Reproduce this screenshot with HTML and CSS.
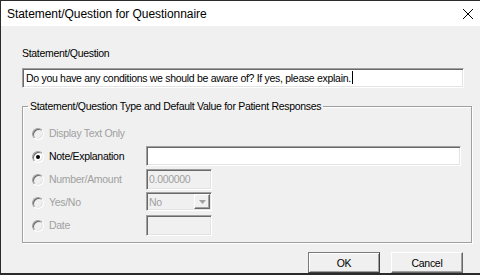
FILE: index.html
```
<!DOCTYPE html>
<html lang="en">
<head>
  <meta charset="UTF-8">
  <title>Statement/Question for Questionnaire</title>
  <link rel="stylesheet" href="styles.css">
</head>
<body>
  <div class="window">
    <div class="titlebar">
      <span class="title">Statement/Question for Questionnaire</span>
      <svg class="close" width="12" height="12" viewBox="0 0 12 12">
        <path d="M1 1 L11 11 M11 1 L1 11" stroke="#000" stroke-width="1" fill="none"/>
      </svg>
    </div>

    <div class="content">
      <div class="field-label">Statement/Question</div>
      <div class="textbox">Do you have any conditions we should be aware of? If yes, please explain.<span class="caret"></span></div>

      <fieldset class="group">
        <legend>Statement/Question Type and Default Value for Patient Responses</legend>

        <div class="option disabled">
          <span class="radio"></span>
          <span class="option-label">Display Text Only</span>
        </div>
        <div class="option">
          <span class="radio checked"></span>
          <span class="option-label">Note/Explanation</span>
          <div class="input wide"></div>
        </div>
        <div class="option disabled">
          <span class="radio"></span>
          <span class="option-label">Number/Amount</span>
          <div class="input short readonly">0.000000</div>
        </div>
        <div class="option disabled">
          <span class="radio"></span>
          <span class="option-label">Yes/No</span>
          <div class="select short">
            <span class="select-value">No</span>
            <span class="select-arrow">
              <svg width="7" height="4" viewBox="0 0 7 4"><path d="M0 0 H7 L3.5 4 Z" fill="#a0a0a0"/></svg>
            </span>
          </div>
        </div>
        <div class="option disabled">
          <span class="radio"></span>
          <span class="option-label">Date</span>
          <div class="input short readonly"></div>
        </div>
      </fieldset>

      <div class="buttons">
        <button class="btn default">OK</button>
        <button class="btn">Cancel</button>
      </div>
    </div>
  </div>
</body>
</html>
```

FILE: styles.css
```
html, body {
  margin: 0;
  padding: 0;
}

body {
  font-family: "Liberation Sans", Arial, sans-serif;
  font-size: 10.5px;
  letter-spacing: -0.3px;
  color: #000;
  background-color: #f0f0f0;
}

.window {
  width: 480px;
  height: 275px;
  box-sizing: border-box;
  border-top: 1px solid #2b2b2b;
  border-left: 1px solid #2b2b2b;
  border-bottom: 2px solid #2b2b2b;
  background-color: #f0f0f0;
  display: flex;
  flex-direction: column;
}

/* title bar */
.titlebar {
  height: 25px;
  flex: none;
  background-color: #ffffff;
  display: flex;
  align-items: center;
  justify-content: space-between;
  padding: 0 6px 0 6px;
}

.title {
  font-size: 12px;
  letter-spacing: -0.05px;
}

/* dialog content */
.content {
  flex: 1;
  padding: 21px 0 0 21px;
  display: flex;
  flex-direction: column;
  align-items: flex-start;
}

.field-label {
  line-height: 13px;
  height: 13px;
}

.textbox {
  margin-top: 8px;
  width: 442px;
  height: 20px;
  box-sizing: border-box;
  background: #ffffff;
  border-style: solid;
  border-width: 1px;
  border-color: #a0a0a0 #ffffff #ffffff #a0a0a0;
  box-shadow: inset 1px 1px 0 #696969, inset -1px -1px 0 #e3e3e3;
  padding: 2px 0 0 3px;
  line-height: 14px;
  white-space: nowrap;
}

.caret {
  display: inline-block;
  width: 1px;
  height: 13px;
  background: #000;
  vertical-align: -2px;
  margin-left: 1px;
}

/* group box */
.group {
  margin: 12px 0 0 0;
  width: 450px;
  box-sizing: border-box;
  border: 1px solid #a0a0a0;
  box-shadow: inset 1px 1px 0 #ffffff, 1px 1px 0 #ffffff;
  padding: 10px 9px 6px 9px;
  display: flex;
  flex-direction: column;
  gap: 2px;
}

.group legend {
  padding: 0 2px;
  margin-left: -4px;
  line-height: 13px;
}

.option {
  height: 21px;
  display: grid;
  grid-template-columns: 17px 97px auto;
  align-items: start;
}

.option .radio {
  margin-top: 5px;
}

.option-label {
  line-height: 13px;
  margin-top: 4px;
}

.option.disabled .option-label {
  color: #a0a0a0;
}

/* radio buttons */
.radio {
  width: 12px;
  height: 12px;
  box-sizing: border-box;
  border-radius: 50%;
  border: 1px solid;
  border-color: #a0a0a0 #ffffff #ffffff #a0a0a0;
  box-shadow: inset 1px 1px 0 #696969, inset -1px -1px 0 #e3e3e3;
  background: #f0f0f0;
  position: relative;
}

.radio.checked {
  background: #ffffff;
}

.radio.checked::after {
  content: "";
  position: absolute;
  left: 3px;
  top: 3px;
  width: 4px;
  height: 4px;
  border-radius: 50%;
  background: #000;
}

/* inputs */
.input,
.select {
  box-sizing: border-box;
  border-style: solid;
  border-width: 1px;
  border-color: #a0a0a0 #ffffff #ffffff #a0a0a0;
  box-shadow: inset 1px 1px 0 #696969, inset -1px -1px 0 #e3e3e3;
}

.input.wide {
  width: 315px;
  height: 20px;
  background: #ffffff;
}

.input.short {
  width: 66px;
  height: 21px;
}

.input.readonly {
  background: #f0f0f0;
  color: #a0a0a0;
  padding: 2px 0 0 2px;
  line-height: 14px;
}

.select {
  height: 19px;
  width: 66px;
  display: flex;
  align-items: center;
  justify-content: space-between;
  color: #a0a0a0;
  padding: 1px 1px 1px 2px;
}

.select-arrow {
  width: 16px;
  height: 15px;
  box-sizing: border-box;
  border: 1px solid;
  border-color: #ffffff #696969 #696969 #ffffff;
  box-shadow: inset -1px -1px 0 #a0a0a0;
  display: flex;
  align-items: center;
  justify-content: center;
}

/* buttons */
.buttons {
  margin-top: 9px;
  align-self: stretch;
  display: flex;
  justify-content: flex-end;
  gap: 11px;
  padding-right: 17px;
}

.btn {
  width: 72px;
  height: 21px;
  box-sizing: border-box;
  font-family: inherit;
  font-size: 10.5px;
  letter-spacing: -0.3px;
  background: #f0f0f0;
  border: 1px solid;
  border-color: #ffffff #696969 #696969 #ffffff;
  box-shadow: inset -1px -1px 0 #a0a0a0;
  padding: 0;
  color: #000;
}

.btn.default {
  border-color: #7a7a7a #404040 #404040 #7a7a7a;
  box-shadow: inset 1px 1px 0 #ffffff, inset -1px -1px 0 #a0a0a0;
}
```
